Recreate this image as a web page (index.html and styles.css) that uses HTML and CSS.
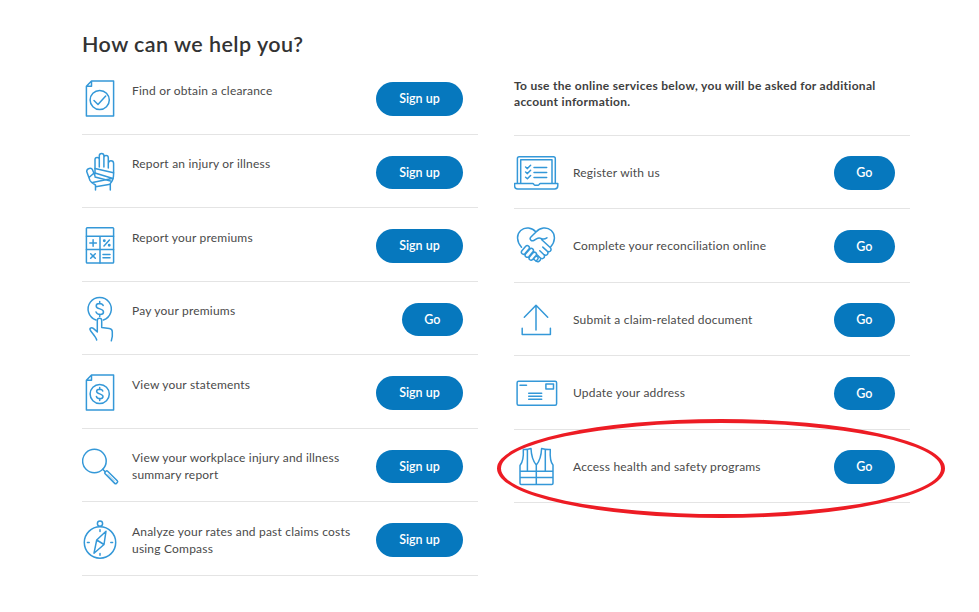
FILE: index.html
```html
<!DOCTYPE html>
<html lang="en">
<head>
  <meta charset="UTF-8" />
  <meta name="viewport" content="width=device-width, initial-scale=1" />
  <title>How can we help you?</title>
  <link rel="stylesheet" href="styles.css">
</head>
<body>
  <main>
    <section class="column">
      <h1>How can we help you?</h1>
      <ul class="services">
        <li>
          <svg class="icon" viewBox="0 0 46 56"><path d="M9.5 10H31.6V45H4.4V15.2ZM9.5 10v5.2H4.4"/><circle cx="17.7" cy="29" r="9.6"/><path d="M12 29.5l4 4 7.7-8.5"/></svg>
          <span class="label">Find or obtain a clearance</span>
          <a class="btn" href="#">Sign up</a>
        </li>
        <li>
          <svg class="icon" viewBox="0 0 46 56"><path d="M13 29V14.6a2.1 2.1 0 0 1 4.3 0V22M17.3 21V10.8a2.3 2.3 0 0 1 4.6 0V22M21.9 12.8a2.2 2.2 0 0 1 4.4 0V23M26.3 18.5a2.6 2.6 0 0 1 5.3 0V29c0 5-1 7-3.3 9.5V45"/><path d="M13 31l-2.5-6.2C9.5 22.3 4.7 23 4.7 26.5L8 35.5c1.2 2.5 3.5 3.5 5.5 4.5v5M13 23.5l18.5 4.3M13 28l18 5.5M7 32.5l4.5-4M13 32l15.5 4M10.5 37.5l19.5-4M13.7 41.7l14.6-2.4"/></svg>
          <span class="label">Report an injury or illness</span>
          <a class="btn" href="#">Sign up</a>
        </li>
        <li>
          <svg class="icon" viewBox="0 0 46 56"><rect x="4.4" y="9.8" width="27.2" height="35.2" rx=".8"/><path d="M4.4 18.3h27.2M4.4 31.6h27.2M18 18.3V45M7.8 25h6.6M11.1 21.7v6.6M22 28l5.4-6M8.7 35.7l4.6 4.6M13.3 35.7l-4.6 4.6M21 36.5h7M21 39.7h7"/><circle cx="22.3" cy="22.8" r=".7"/><circle cx="27.2" cy="27.2" r=".7"/></svg>
          <span class="label">Report your premiums</span>
          <a class="btn" href="#">Sign up</a>
        </li>
        <li>
          <svg class="icon" viewBox="0 0 46 56"><path d="M14 28a11.6 11.6 0 1 1 7.4 0"/><path d="M21.2 13.6c-1-3-7-2.8-7 .3 0 3.8 7.3 2.2 7.3 6 0 3.3-6.5 3.5-7.5 0M17.7 9.500v2.300M17.700 22.300v2.300"/><path d="M14.700 48c-1-4-6-8-6.700-10.500-.5-1.800 2-2 3.300-1.100l4 3.500V28.500a2.200 2.200 0 0 1 4.400 0v7l7.600 1c2 .3 3 1.300 3 3.200v4.600l-1 4.500"/></svg>
          <span class="label">Pay your premiums</span>
          <a class="btn" href="#">Go</a>
        </li>
        <li>
          <svg class="icon" viewBox="0 0 46 56"><path d="M9.5 10H31.6V45H4.4V15.2ZM9.5 10v5.2H4.4"/><circle cx="17.7" cy="29" r="9.6"/><path d="M20.8 26c-.9-2.600-6.200-2.400-6.200.3 0 3.200 6.400 1.900 6.400 5.200 0 2.900-5.700 3.100-6.600 0M17.700 22.400v2M17.700 33.600v2"/></svg>
          <span class="label">View your statements</span>
          <a class="btn" href="#">Sign up</a>
        </li>
        <li>
          <svg class="icon" viewBox="0 0 46 56"><circle cx="12.4" cy="22" r="11.8"/><path d="M20.7 30.3l2.500 2.500"/><rect x="21.2" y="36.5" width="16" height="3.6" rx="1.2" transform="rotate(45 29.2 38.3)"/><path d="M26 35.500l6.500 6.500" stroke-width=".6"/></svg>
          <span class="label">View your workplace injury and illness summary report</span>
          <a class="btn" href="#">Sign up</a>
        </li>
        <li>
          <svg class="icon" viewBox="0 0 46 56"><circle cx="18" cy="30.5" r="15.7"/><circle cx="18" cy="11.6" r="2.6"/><path d="M24 19.200l-9.300 8.800L12 41.200l10-8.700zM14.700 28l7.300 4.500M18 17.700v1.800M18 41.500v1.800M5.400 30.500h1.800M28.800 30.500h1.800"/></svg>
          <span class="label">Analyze your rates and past claims costs using Compass</span>
          <a class="btn" href="#">Sign up</a>
        </li>
      </ul>
    </section>

    <section class="column account">
      <p class="note">To use the online services below, you will be asked for additional account information.</p>
      <ul class="services">
        <li>
          <svg class="icon" viewBox="0 0 46 56"><path d="M3.400 37.300V12.500q0-1.800 1.800-1.800h34.300q1.800 0 1.800 1.800v24.800M6.700 37.300V13.800H38v23.500M.6 37.400h18.200c.8 0 1 1.800 2 1.800h3.500c1 0 1.200-1.800 2-1.800h17.500v2.300q0 3.200-3.200 3.200H3.800q-3.200 0-3.200-3.200zM20 21.500h12.700M20 26.500h12.700M20 31.600h12.700M11.600 21l1.800 1.600 3.200-3.300M11.600 26l1.800 1.600 3.200-3.300M11.600 31.200l1.800 1.600 3.200-3.300"/></svg>
          <span class="label">Register with us</span>
          <a class="btn" href="#">Go</a>
        </li>
        <li>
          <svg class="icon" viewBox="0 0 46 56"><path d="M7.500 28.200C2.500 22.500 2.300 15.500 6.700 11.500 11.300 7.300 18 8.500 22 13c4-4.500 10.700-5.700 15.300-1.500 4.400 4 4.100 11-.7 16.500M22 13l-5.300 5.200c-1.600 1.700.7 4.500 3 3.300l3.200-1.900c2.500-1.300 4.300 0 6 .4 1.700.3 2.700-.3 4-1.200M27.500 20.500l8.700 8c2.200 2.600-.6 5.300-3 3.600l-4.400-4M33.200 32.100c2 2.600-.7 5.300-3.200 3.600l-4.200-4M30 35.700c1.500 2.800-1.200 5-3.600 3.300l-3.100-3M26.600 39c.5 3-2.800 4.700-5 2.800l-1.800-1.600"/><path d="M7.900 31.800l3.600-4.300c2-2.200 5 .2 3.400 2.500l-3.800 4.500c-2 2.100-4.900-.4-3.200-2.700zM11.500 35.100l4.200-4.900c2-2.100 4.900.3 3.200 2.600L15 37.400c-2 2.100-5-.1-3.500-2.300zM15.500 38l3.300-4c2-2.100 4.800.3 3.200 2.500l-3.200 3.800c-2 2.100-4.800-.1-3.300-2.300zM19 40.400l2-2.400c1.800-1.800 4 .3 2.700 2.200l-1.500 1.900"/></svg>
          <span class="label">Complete your reconciliation online</span>
          <a class="btn" href="#">Go</a>
        </li>
        <li>
          <svg class="icon" viewBox="0 0 46 56"><path d="M22 37V12.500M10.300 24.300L22 12.300l11.700 12M8.200 35.300v6.200h28.200v-6.200"/></svg>
          <span class="label">Submit a claim-related document</span>
          <a class="btn" href="#">Go</a>
        </li>
        <li>
          <svg class="icon" viewBox="0 0 46 56"><rect x="3.1" y="15.3" width="39.5" height="24" rx="1.5"/><rect x="31.9" y="18.1" width="7.6" height="5"/><path d="M6 19.200h6.500M14.700 27.200h13M14.700 30.200h13M14.700 33.200h13"/></svg>
          <span class="label">Update your address</span>
          <a class="btn" href="#">Go</a>
        </li>
        <li class="circled">
          <svg class="icon" viewBox="0 0 46 56"><path d="M9.300 9.500c2 .2 5.500-.3 7.700-1 .3 7 2.300 13 5.300 16.500 3-3.500 5-9.500 5.300-16.500 2.200.7 6 1.200 8.700 1-.5 8 .2 12.800 2.700 15.500v18.200q0 1.200-1.200 1.200H7.200Q6 44.400 6 43.200V25.500c3.300-4 3.700-9 3.300-16zM13.400 9.500V31M31.300 9.500V31M22.300 25v19.400M6 31.200h33M6 37.500h33"/></svg>
          <span class="label">Access health and safety programs</span>
          <a class="btn" href="#">Go</a>
        </li>
      </ul>
    </section>
  </main>
</body>
</html>
```
FILE: styles.css
```css
* {
  box-sizing: border-box;
}
body {
  margin: 0;
  background: #fff;
  color: #4a4a4a;
  font-family: Lato, sans-serif;
}
main {
  display: flex;
  gap: 36px;
  padding: 30px 0 0 82px;
}
.column {
  width: 396px;
}
h1 {
  margin: 0;
  height: 31.3px;
  color: #333;
  font-size: 21.5px;
  font-weight: 600;
  line-height: 29px;
  letter-spacing: 0.45px;
  white-space: nowrap;
}
.services {
  list-style: none;
  margin: 0;
  padding: 0;
}
.services li {
  display: flex;
  align-items: flex-start;
  height: 73.5px;
  padding-top: 10px;
  border-bottom: 1px solid #e4e4e4;
}
.icon {
  flex: none;
  width: 46px;
  height: 56px;
  margin-right: 4px;
  fill: none;
  stroke: #3498d8;
  stroke-width: 1.5;
  stroke-linecap: round;
  stroke-linejoin: round;
}
.label {
  width: 226px;
  margin-top: 10.5px;
  font-size: 12px;
  line-height: 17px;
  letter-spacing: 0.2px;
}
.btn {
  margin: 11px 15px 0 auto;
  width: 87px;
  height: 33.5px;
  border-radius: 17px;
  background: #0678be;
  color: #fff;
  font-size: 12.5px;
  font-weight: 600;
  line-height: 34px;
  text-align: center;
  text-decoration: none;
}
.services li:nth-child(4) .btn,
.account .btn {
  width: 61.5px;
}
.note {
  margin: 0;
  height: 105.7px;
  padding-top: 48px;
  border-bottom: 1px solid #e4e4e4;
  color: #404040;
  font-size: 12px;
  font-weight: 700;
  line-height: 16px;
  letter-spacing: 0.3px;
}
.account .icon {
  margin-right: 13px;
}
.account .label {
  margin-top: 18px;
}
.account .btn {
  margin-top: 10.5px;
}

/* red highlight around the last service */
.circled {
  position: relative;
}
.circled::after {
  content: "";
  box-sizing: border-box;
  position: absolute;
  left: -17px;
  top: -10.5px;
  width: 448px;
  height: 99px;
  border: 4px solid #ed1c24;
  border-radius: 50%;
  pointer-events: none;
}
```
